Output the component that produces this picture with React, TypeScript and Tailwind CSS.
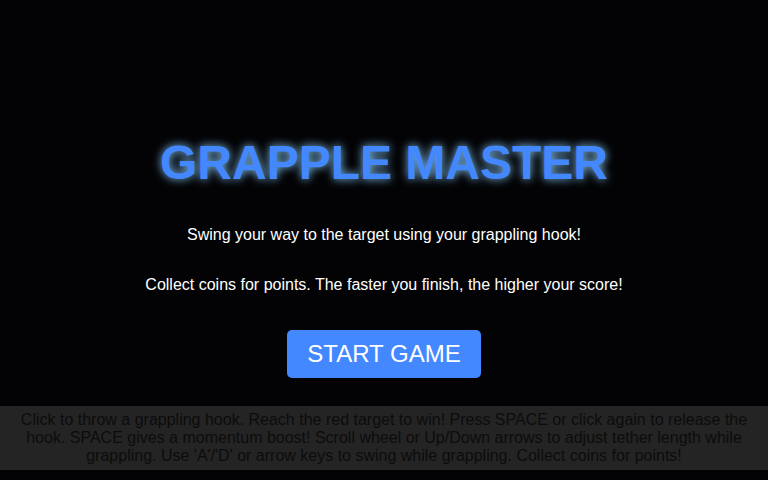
export default function App() {
  return (
    <div className="flex min-h-screen flex-col bg-[#030305] text-center font-['Liberation_Sans',Arial,sans-serif] text-base leading-[18px]">
      <main className="flex flex-1 flex-col items-center justify-end pb-7 text-white">
        <h1 className="text-5xl leading-[54px] font-bold text-[#4488ff] [text-shadow:0_0_10px_#88ccff]">GRAPPLE MASTER</h1>
        <p className="mt-9">Swing your way to the target using your grappling hook!</p>
        <p className="mt-8">Collect coins for points. The faster you finish, the higher your score!</p>
        <button type="button" className="mt-9 h-12 cursor-pointer rounded-[5px] bg-[#4488ff] px-5 text-2xl text-white">START GAME</button>
      </main>
      <footer className="mb-2.5 bg-[#242424] px-5 py-[5px] text-[#0c0c0c]">
        Click to throw a grappling hook. Reach the red target to win! Press SPACE or click again to release the hook. SPACE gives a momentum boost! Scroll wheel or Up/Down arrows to adjust tether length while grappling. Use 'A'/'D' or arrow keys to swing while grappling. Collect coins for points!
      </footer>
    </div>
  );
}
